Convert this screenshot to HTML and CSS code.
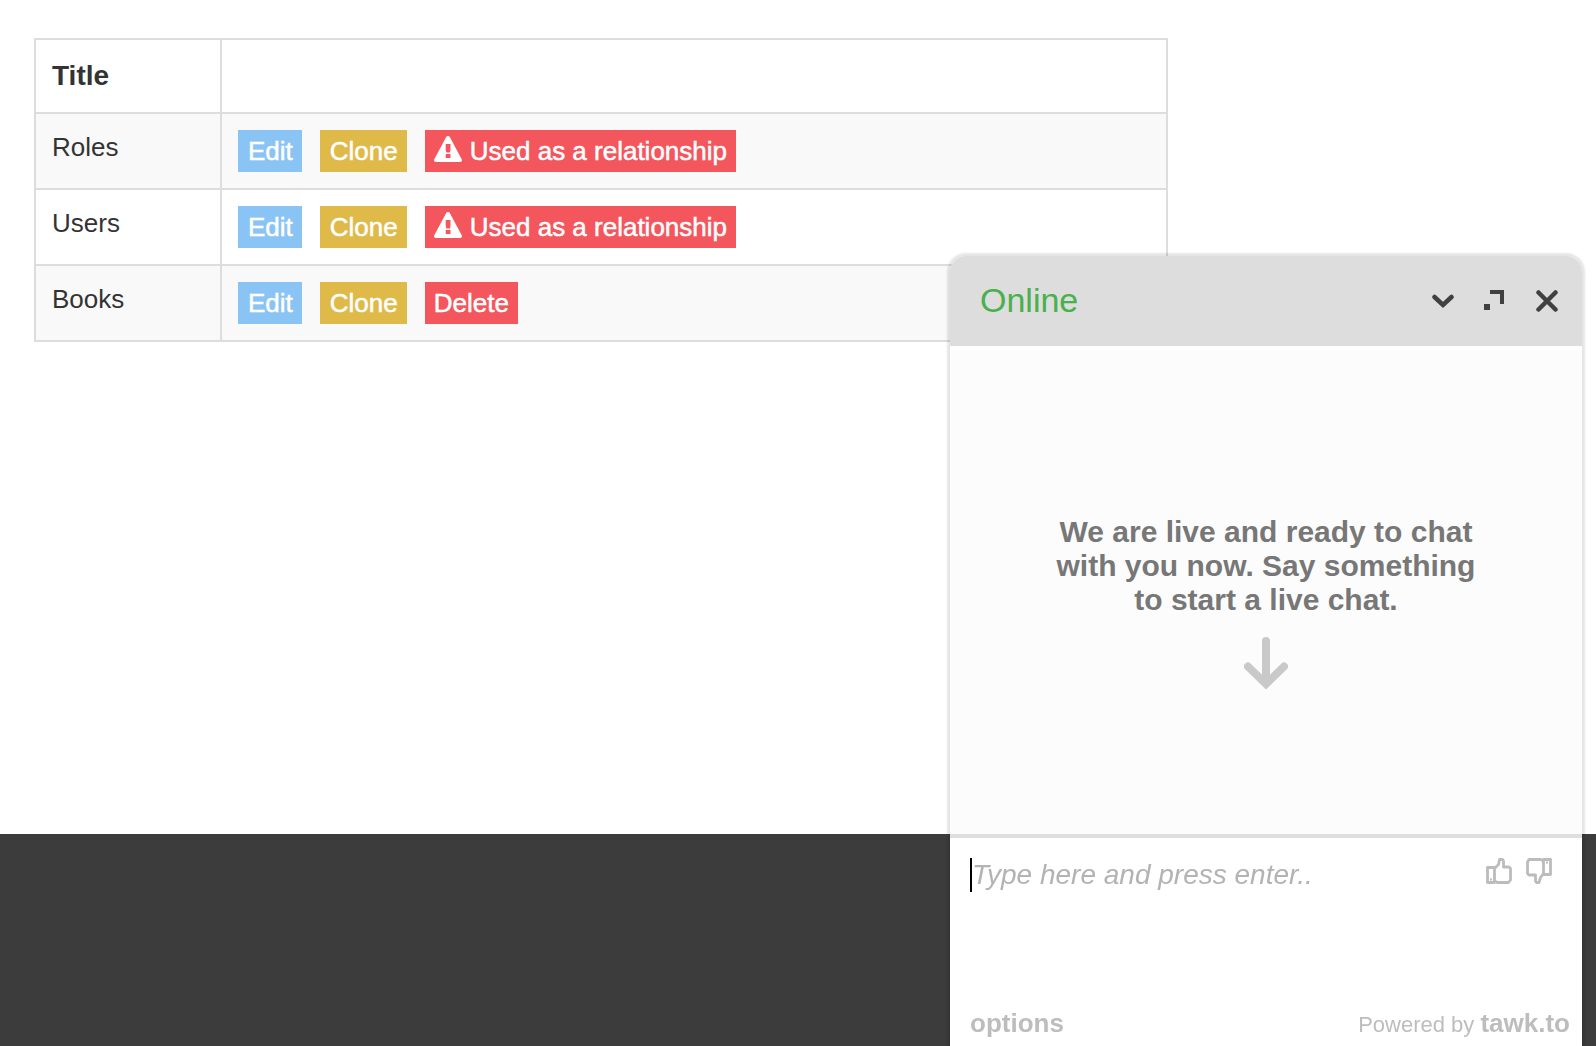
FILE: index.html
```html
<!DOCTYPE html>
<html lang="en">
<head>
  <meta charset="UTF-8">
  <title>Menu</title>
  <link rel="stylesheet" href="styles.css">
</head>
<body>
  <main class="content">
    <table class="menu-table">
      <thead>
        <tr>
          <th class="title-col">Title</th>
          <th></th>
        </tr>
      </thead>
      <tbody>
        <tr>
          <td>Roles</td>
          <td>
            <div class="actions">
              <a href="#" class="btn btn-edit">Edit</a>
              <button type="button" class="btn btn-clone">Clone</button>
              <button type="button" class="btn btn-delete">
                <svg class="warning" viewBox="0 0 28 26" aria-hidden="true"><path fill="#fff" fill-rule="evenodd" d="M14 0Q15.200 0 15.800 1L27.700 23.300Q28.600 26 26.300 26H1.700Q-.6 26 .3 23.300L12.200 1Q12.800 0 14 0ZM11.700 8V13L12.200 16.500H16L16.500 13V8ZM11.700 18V22H16.500V18Z"/></svg>
                Used as a relationship
              </button>
            </div>
          </td>
        </tr>
        <tr>
          <td>Users</td>
          <td>
            <div class="actions">
              <a href="#" class="btn btn-edit">Edit</a>
              <button type="button" class="btn btn-clone">Clone</button>
              <button type="button" class="btn btn-delete">
                <svg class="warning" viewBox="0 0 28 26" aria-hidden="true"><path fill="#fff" fill-rule="evenodd" d="M14 0Q15.200 0 15.800 1L27.700 23.300Q28.600 26 26.300 26H1.700Q-.6 26 .3 23.300L12.200 1Q12.800 0 14 0ZM11.700 8V13L12.200 16.500H16L16.500 13V8ZM11.700 18V22H16.500V18Z"/></svg>
                Used as a relationship
              </button>
            </div>
          </td>
        </tr>
        <tr>
          <td>Books</td>
          <td>
            <div class="actions">
              <a href="#" class="btn btn-edit">Edit</a>
              <button type="button" class="btn btn-clone">Clone</button>
              <button type="button" class="btn btn-delete">Delete</button>
            </div>
          </td>
        </tr>
      </tbody>
    </table>
  </main>
  <footer class="footer"></footer>

  <section class="chat">
    <header class="chat-header">
      <h2>Online</h2>
      <div class="chat-controls">
        <button type="button" aria-label="Minimize">
          <svg width="22" height="22" viewBox="0 0 22 22"><path d="M2.500 7L11 15L19.500 7" fill="none" stroke="#404040" stroke-width="4.500" stroke-linecap="round"/></svg>
        </button>
        <button type="button" aria-label="Pop out">
          <svg width="22" height="22" viewBox="0 0 22 22"><path d="M6 0H20V14H16V4H6ZM0 14H6V20H0Z" fill="#404040"/></svg>
        </button>
        <button type="button" aria-label="Close">
          <svg width="22" height="22" viewBox="0 0 22 22"><path d="M2.500 2.500L19.500 19.500M19.500 2.500L2.500 19.500" fill="none" stroke="#404040" stroke-width="4.500" stroke-linecap="round"/></svg>
        </button>
      </div>
    </header>
    <div class="chat-body">
      <p>We are live and ready to chat with you now. Say something to start a live chat.</p>
      <svg width="44" height="52" viewBox="0 0 44 52" aria-hidden="true"><path d="M22 4V46M4 29.500L22 47L40 29.500" fill="none" stroke="#c9c9c9" stroke-width="8" stroke-linecap="round"/></svg>
    </div>
    <form class="chat-form">
      <div class="compose">
        <input type="text" class="message" placeholder="Type here and press enter.." aria-label="Message">
        <div class="rating">
          <button type="button" aria-label="Thumbs up">
            <svg width="26" height="26" viewBox="0 0 26 26"><g fill="none" stroke="#bcbcbc" stroke-width="2.800" stroke-linejoin="round"><path d="M1.500 9.500H8.500V24.500H1.500Z"/><path d="M8.500 10.500L12.500 6.500L13.500 1.500H16.500L17.500 3V9H23L24.500 10.500V22L22.500 24.500H11L8.500 22.500"/><path d="M4 21.500H6" stroke-width="2"/></g></svg>
          </button>
          <button type="button" aria-label="Thumbs down">
            <svg width="26" height="26" viewBox="0 0 26 26"><g fill="none" stroke="#bcbcbc" stroke-width="2.800" stroke-linejoin="round"><path d="M24.500 16.500H17.500V1.500H24.500Z"/><path d="M17.500 15.500L14.500 19.500L13 24.500H10.500L9.500 23V17H3L1.500 15.500V4L3 1.500H15L17.500 3.500"/><path d="M20 4.500H22" stroke-width="2"/></g></svg>
          </button>
        </div>
      </div>
      <div class="chat-links">
        <a href="#" class="options">options</a>
        <a href="#" class="powered">Powered by <strong>tawk.to</strong></a>
      </div>
    </form>
  </section>
</body>
</html>
```

FILE: styles.css
```css
* {
  box-sizing: border-box;
}
body {
  display: flex;
  flex-direction: column;
  min-height: 100vh;
  margin: 0;
  background: #fff;
  color: #333;
  font-family: "Liberation Sans", Arial, sans-serif;
  font-size: 26px;
}
button {
  font: inherit;
  border: none;
  cursor: pointer;
}
a {
  text-decoration: none;
}
svg {
  display: block;
}
.content {
  flex: 1;
  padding: 38px 34px;
}
.menu-table {
  width: 1134px;
  max-width: 100%;
  border-collapse: collapse;
  line-height: 36px;
}
.menu-table th,
.menu-table td {
  border: 2px solid #ddd;
  padding: 16px;
  text-align: left;
  vertical-align: top;
}
.menu-table th {
  padding: 18px 16px;
  font-size: 28px;
}
.menu-table td {
  line-height: 38px;
}
.menu-table td:first-child {
  padding-top: 14px;
}
.menu-table tbody tr:nth-child(odd) {
  background: #f9f9f9;
}
.title-col {
  width: 186px;
}
.actions {
  display: flex;
  gap: 18px;
}
.btn {
  display: flex;
  align-items: center;
  height: 42px;
  padding: 0 9px 0 10px;
  color: #fff;
  -webkit-text-stroke: 0.5px #fff;
}
.btn-edit {
  background: #89c4f4;
}
.btn-clone {
  background: #dfba49;
}
.btn-delete {
  padding: 0 9px;
  background: #f3565d;
}
.warning {
  width: 28px;
  height: 26px;
  margin-right: 8px;
  margin-bottom: 4px;
}
.footer {
  height: 212px;
  background: #3c3c3c;
}

/* chat widget */
.chat {
  position: fixed;
  right: 14px;
  bottom: 0;
  width: 632px;
  background: #fff;
  border-radius: 16px 16px 0 0;
  box-shadow: 0 0 2px 3px rgba(0, 0, 0, 0.1);
}
.chat-header {
  display: flex;
  align-items: center;
  justify-content: space-between;
  height: 90px;
  padding: 0 24px 0 30px;
  background: #ddd;
  border-radius: 16px 16px 0 0;
}
.chat-header h2 {
  margin: 0;
  padding-bottom: 2px;
  color: #48b14c;
  font-size: 34px;
  font-weight: normal;
}
.chat-controls {
  display: flex;
  gap: 30px;
}
.chat-controls button,
.rating button {
  padding: 0;
  background: none;
}
.chat-body {
  display: flex;
  flex-direction: column;
  align-items: center;
  justify-content: center;
  gap: 20px;
  height: 492px;
  padding-top: 20px;
  border-top: 4px solid #fff;
  border-bottom: 4px solid #dfdfdf;
  background: #fcfcfc;
}
.chat-body p {
  width: 440px;
  margin: 0;
  color: #777;
  font-size: 30px;
  font-weight: bold;
  line-height: 34px;
  text-align: center;
}
.chat-form {
  display: flex;
  flex-direction: column;
  justify-content: space-between;
  height: 208px;
  padding: 20px 12px 7px 20px;
}
.compose {
  display: flex;
  justify-content: space-between;
}
.message {
  width: 400px;
  height: 34px;
  padding: 0;
  border: none;
  border-left: 2px solid #000;
  outline: none;
  font: italic 28px "Liberation Sans", Arial, sans-serif;
}
.message::placeholder {
  color: #b3b3b3;
}
.rating {
  display: flex;
  align-items: flex-start;
  gap: 14px;
  padding-right: 18px;
}
.chat-links {
  display: flex;
  align-items: baseline;
  justify-content: space-between;
}
.chat-links a {
  color: #bdbdbd;
}
.options {
  font-weight: bold;
}
.powered {
  font-size: 22px;
}
.powered strong {
  font-size: 26px;
}
```
